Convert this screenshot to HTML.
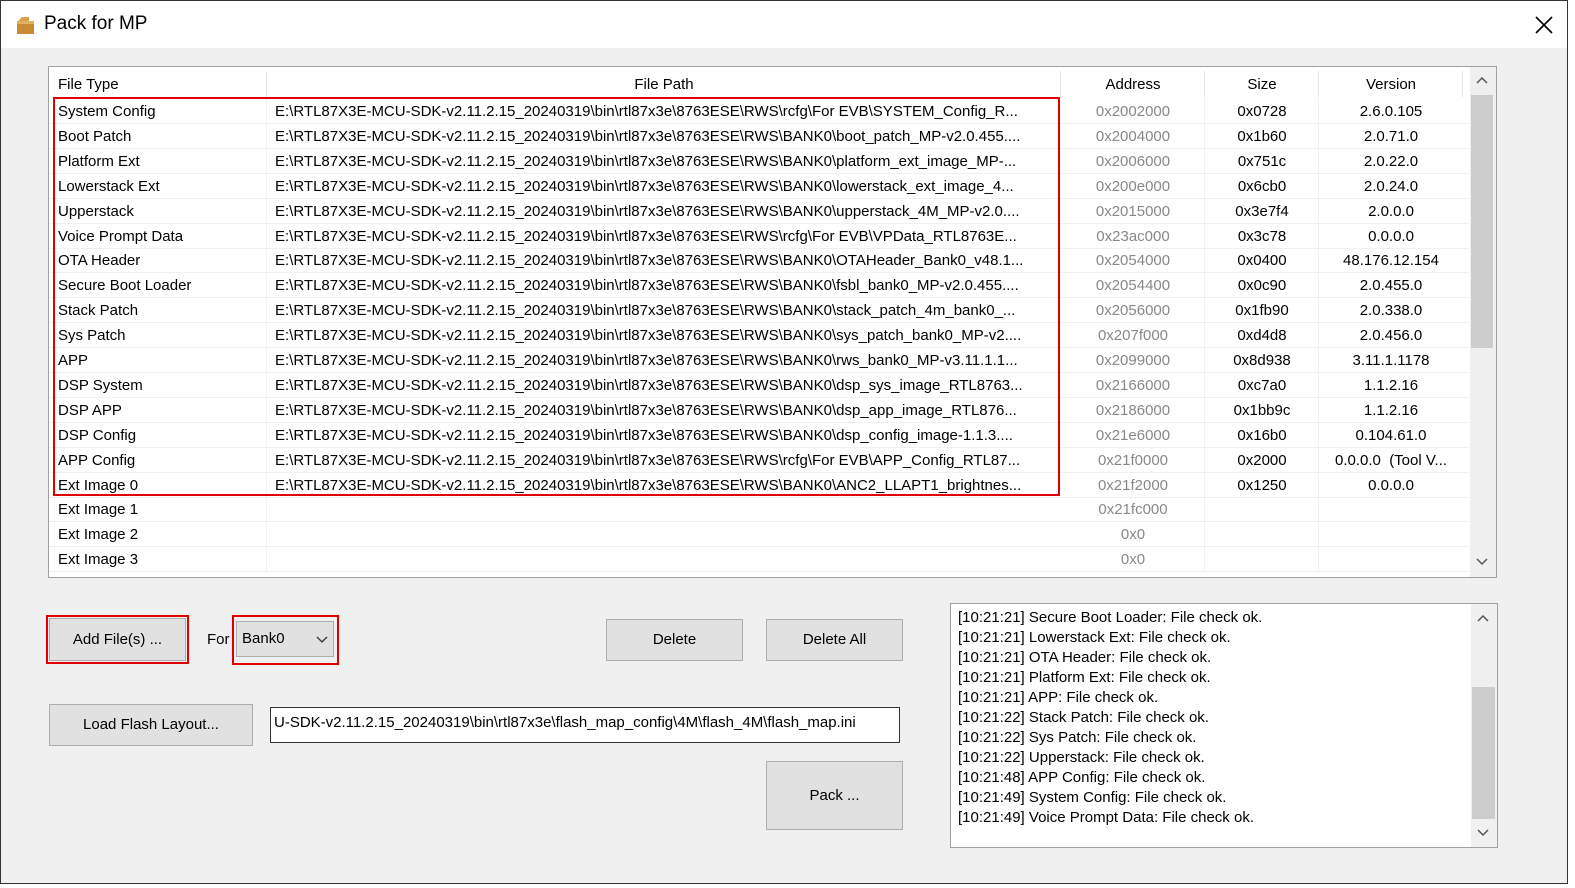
<!DOCTYPE html>
<html><head><meta charset="utf-8"><style>
*{margin:0;padding:0;box-sizing:border-box}
body{width:1575px;height:888px;background:#fff;font-family:"Liberation Sans",sans-serif;font-size:15px;color:#000;position:relative;overflow:hidden}
.win{position:absolute;left:0;top:0;width:1568px;height:884px;border:1px solid #333;background:#f0f0f0}
.title{position:absolute;left:0;top:0;width:100%;height:47px;background:#fff}
.abs{position:absolute}
.tbl{position:absolute;left:47px;top:65px;width:1449px;height:512px;border:1px solid #a0a0a0;background:#fff;overflow:hidden}
.row{position:absolute;left:0;height:25px;line-height:25px;width:1420px;border-bottom:1px solid #f0f0f0;white-space:nowrap}
.c{position:absolute;top:0;overflow:hidden}
.btn{position:absolute;background:#e1e1e1;border:1px solid #adadad;text-align:center;font-size:15px}
.red{position:absolute;border:2px solid #e00000}
.log div{height:20px;line-height:20px;white-space:nowrap}
</style></head><body>
<div class="win">
<div class="title">
<svg class="abs" style="left:15px;top:14px" width="20" height="20"><path d="M2 6 L6 2 L13 2 L13 6 Z" fill="#d9a24a"/><rect x="1" y="6" width="17" height="13" fill="#c98a35"/><rect x="1" y="6" width="17" height="3" fill="#e2b060"/></svg>
<div class="abs" style="left:43px;top:12px;font-size:19px">Pack for MP</div>
<svg class="abs" style="left:1534px;top:15px" width="18" height="18"><path d="M1 1L17 17M17 1L1 17" stroke="#000" stroke-width="1.6"/></svg>
</div>
<div class="tbl">
<div class="row" style="top:4px;height:28px;line-height:28px;border:none">
<div class="c" style="left:9px">File Type</div>
<div class="c" style="left:217px;width:1px;height:26px;background:#e5e5e5"></div>
<div class="c" style="left:218px;width:794px;text-align:center">File Path</div>
<div class="c" style="left:1011px;width:1px;height:26px;background:#e5e5e5"></div>
<div class="c" style="left:1012px;width:144px;text-align:center">Address</div>
<div class="c" style="left:1155px;width:1px;height:26px;background:#e5e5e5"></div>
<div class="c" style="left:1156px;width:114px;text-align:center">Size</div>
<div class="c" style="left:1269px;width:1px;height:26px;background:#e5e5e5"></div>
<div class="c" style="left:1270px;width:144px;text-align:center">Version</div>
<div class="c" style="left:1413px;width:1px;height:26px;background:#e5e5e5"></div>
</div>
<div id="rows"></div>
<div class="abs" style="left:1421px;top:0;width:26px;height:510px;background:#f0f0f0"></div>
<div class="abs" style="left:1422px;top:28px;width:22px;height:253px;background:#cdcdcd"></div>
<svg class="abs" style="left:1426px;top:8px" width="14" height="10"><path d="M2 8L7 3L12 8" stroke="#555" stroke-width="1.5" fill="none"/></svg>
<svg class="abs" style="left:1426px;top:490px" width="14" height="10"><path d="M2 2L7 7L12 2" stroke="#555" stroke-width="1.5" fill="none"/></svg>
</div>
<div class="red" style="left:52px;top:96px;width:1007px;height:399px"></div>

<div class="btn" style="left:48px;top:617px;width:137px;height:43px;line-height:41px">Add File(s) ...</div>
<div class="red" style="left:45px;top:614px;width:143px;height:49px"></div>
<div class="abs" style="left:206px;top:630px">For</div>
<div class="abs" style="left:235px;top:620px;width:98px;height:36px;background:#e1e1e1;border:1px solid #adadad;line-height:34px;padding-left:5px">Bank0
<svg class="abs" style="left:78px;top:13px" width="14" height="10"><path d="M2 2L7 7L12 2" stroke="#333" stroke-width="1.3" fill="none"/></svg></div>
<div class="red" style="left:231px;top:614px;width:107px;height:50px"></div>
<div class="btn" style="left:605px;top:618px;width:137px;height:42px;line-height:40px">Delete</div>
<div class="btn" style="left:765px;top:618px;width:137px;height:42px;line-height:40px">Delete All</div>
<div class="btn" style="left:48px;top:703px;width:204px;height:42px;line-height:40px">Load Flash Layout...</div>
<div class="abs" style="left:269px;top:706px;width:630px;height:36px;background:#fff;border:1px solid #333;line-height:30px;padding-left:3px;white-space:nowrap;overflow:hidden">U-SDK-v2.11.2.15_20240319\bin\rtl87x3e\flash_map_config\4M\flash_4M\flash_map.ini</div>
<div class="btn" style="left:765px;top:760px;width:137px;height:69px;line-height:67px">Pack ...</div>

<div class="abs log" style="left:949px;top:602px;width:548px;height:245px;background:#fff;border:1px solid #a0a0a0;padding:4px 0 0 7px">
<div>[10:21:21] Secure Boot Loader: File check ok.</div>
<div>[10:21:21] Lowerstack Ext: File check ok.</div>
<div>[10:21:21] OTA Header: File check ok.</div>
<div>[10:21:21] Platform Ext: File check ok.</div>
<div>[10:21:21] APP: File check ok.</div>
<div>[10:21:22] Stack Patch: File check ok.</div>
<div>[10:21:22] Sys Patch: File check ok.</div>
<div>[10:21:22] Upperstack: File check ok.</div>
<div>[10:21:48] APP Config: File check ok.</div>
<div>[10:21:49] System Config: File check ok.</div>
<div>[10:21:49] Voice Prompt Data: File check ok.</div>
<div class="abs" style="left:520px;top:0;width:26px;height:243px;background:#f0f0f0"></div>
<div class="abs" style="left:521px;top:83px;width:23px;height:132px;background:#cdcdcd"></div>
<svg class="abs" style="left:525px;top:9px" width="14" height="10"><path d="M2 8L7 3L12 8" stroke="#555" stroke-width="1.5" fill="none"/></svg>
<svg class="abs" style="left:525px;top:224px" width="14" height="10"><path d="M2 2L7 7L12 2" stroke="#555" stroke-width="1.5" fill="none"/></svg>
</div>
</div>
<script>
var d=[["System Config","E:\\RTL87X3E-MCU-SDK-v2.11.2.15_20240319\\bin\\rtl87x3e\\8763ESE\\RWS\\rcfg\\For EVB\\SYSTEM_Config_R...","0x2002000","0x0728","2.6.0.105"],
["Boot Patch","E:\\RTL87X3E-MCU-SDK-v2.11.2.15_20240319\\bin\\rtl87x3e\\8763ESE\\RWS\\BANK0\\boot_patch_MP-v2.0.455....","0x2004000","0x1b60","2.0.71.0"],
["Platform Ext","E:\\RTL87X3E-MCU-SDK-v2.11.2.15_20240319\\bin\\rtl87x3e\\8763ESE\\RWS\\BANK0\\platform_ext_image_MP-...","0x2006000","0x751c","2.0.22.0"],
["Lowerstack Ext","E:\\RTL87X3E-MCU-SDK-v2.11.2.15_20240319\\bin\\rtl87x3e\\8763ESE\\RWS\\BANK0\\lowerstack_ext_image_4...","0x200e000","0x6cb0","2.0.24.0"],
["Upperstack","E:\\RTL87X3E-MCU-SDK-v2.11.2.15_20240319\\bin\\rtl87x3e\\8763ESE\\RWS\\BANK0\\upperstack_4M_MP-v2.0....","0x2015000","0x3e7f4","2.0.0.0"],
["Voice Prompt Data","E:\\RTL87X3E-MCU-SDK-v2.11.2.15_20240319\\bin\\rtl87x3e\\8763ESE\\RWS\\rcfg\\For EVB\\VPData_RTL8763E...","0x23ac000","0x3c78","0.0.0.0"],
["OTA Header","E:\\RTL87X3E-MCU-SDK-v2.11.2.15_20240319\\bin\\rtl87x3e\\8763ESE\\RWS\\BANK0\\OTAHeader_Bank0_v48.1...","0x2054000","0x0400","48.176.12.154"],
["Secure Boot Loader","E:\\RTL87X3E-MCU-SDK-v2.11.2.15_20240319\\bin\\rtl87x3e\\8763ESE\\RWS\\BANK0\\fsbl_bank0_MP-v2.0.455....","0x2054400","0x0c90","2.0.455.0"],
["Stack Patch","E:\\RTL87X3E-MCU-SDK-v2.11.2.15_20240319\\bin\\rtl87x3e\\8763ESE\\RWS\\BANK0\\stack_patch_4m_bank0_...","0x2056000","0x1fb90","2.0.338.0"],
["Sys Patch","E:\\RTL87X3E-MCU-SDK-v2.11.2.15_20240319\\bin\\rtl87x3e\\8763ESE\\RWS\\BANK0\\sys_patch_bank0_MP-v2....","0x207f000","0xd4d8","2.0.456.0"],
["APP","E:\\RTL87X3E-MCU-SDK-v2.11.2.15_20240319\\bin\\rtl87x3e\\8763ESE\\RWS\\BANK0\\rws_bank0_MP-v3.11.1.1...","0x2099000","0x8d938","3.11.1.1178"],
["DSP System","E:\\RTL87X3E-MCU-SDK-v2.11.2.15_20240319\\bin\\rtl87x3e\\8763ESE\\RWS\\BANK0\\dsp_sys_image_RTL8763...","0x2166000","0xc7a0","1.1.2.16"],
["DSP APP","E:\\RTL87X3E-MCU-SDK-v2.11.2.15_20240319\\bin\\rtl87x3e\\8763ESE\\RWS\\BANK0\\dsp_app_image_RTL876...","0x2186000","0x1bb9c","1.1.2.16"],
["DSP Config","E:\\RTL87X3E-MCU-SDK-v2.11.2.15_20240319\\bin\\rtl87x3e\\8763ESE\\RWS\\BANK0\\dsp_config_image-1.1.3....","0x21e6000","0x16b0","0.104.61.0"],
["APP Config","E:\\RTL87X3E-MCU-SDK-v2.11.2.15_20240319\\bin\\rtl87x3e\\8763ESE\\RWS\\rcfg\\For EVB\\APP_Config_RTL87...","0x21f0000","0x2000","0.0.0.0&nbsp; (Tool V..."],
["Ext Image 0","E:\\RTL87X3E-MCU-SDK-v2.11.2.15_20240319\\bin\\rtl87x3e\\8763ESE\\RWS\\BANK0\\ANC2_LLAPT1_brightnes...","0x21f2000","0x1250","0.0.0.0"],
["Ext Image 1","","0x21fc000","",""],["Ext Image 2","","0x0","",""],["Ext Image 3","","0x0","",""]];
var h="";d.forEach(function(r,i){h+='<div class="row" style="top:'+(32+i*24.9)+'px"><div class="c" style="left:9px">'+r[0]+'</div><div class="c" style="left:226px;width:780px">'+r[1].replace(/\\/g,"&#92;")+'</div><div class="c" style="left:1012px;width:144px;text-align:center;color:#888">'+r[2]+'</div><div class="c" style="left:1156px;width:114px;text-align:center">'+r[3]+'</div><div class="c" style="left:1270px;width:144px;text-align:center">'+r[4]+'</div><div class="c" style="left:217px;width:1px;height:25px;background:#f0f0f0"></div><div class="c" style="left:1155px;width:1px;height:25px;background:#f0f0f0"></div><div class="c" style="left:1269px;width:1px;height:25px;background:#f0f0f0"></div></div>'});
document.getElementById("rows").innerHTML=h;
</script>
</body></html>
